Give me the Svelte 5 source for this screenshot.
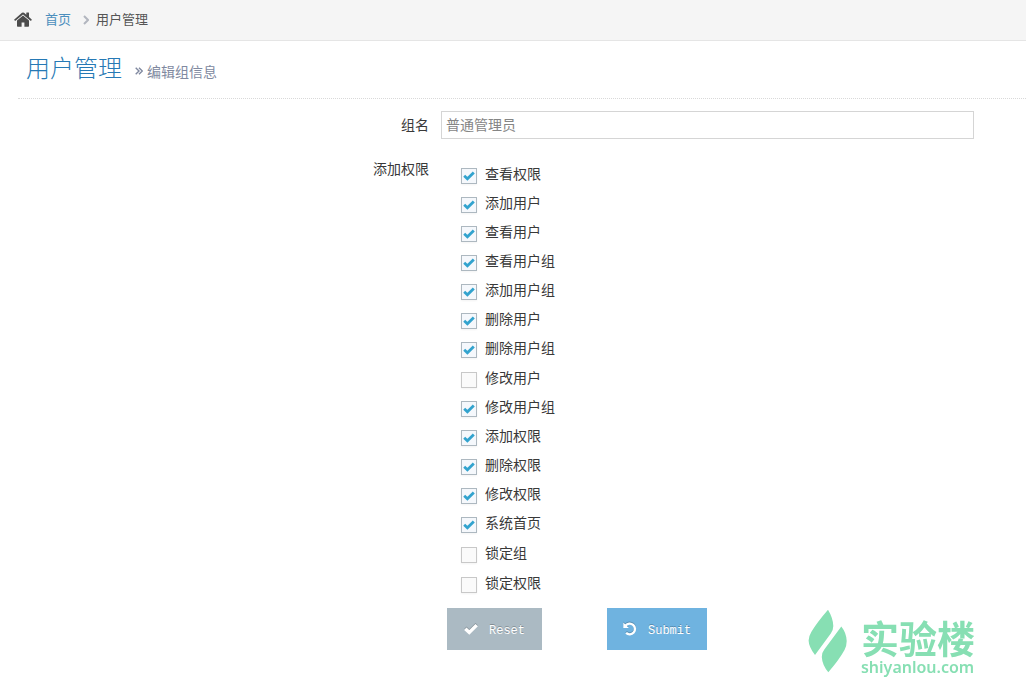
<script>
    let groupName = $state('普通管理员');

    const defaults = [
        { name: '查看权限', checked: true },
        { name: '添加用户', checked: true },
        { name: '查看用户', checked: true },
        { name: '查看用户组', checked: true },
        { name: '添加用户组', checked: true },
        { name: '删除用户', checked: true },
        { name: '删除用户组', checked: true },
        { name: '修改用户', checked: false },
        { name: '修改用户组', checked: true },
        { name: '添加权限', checked: true },
        { name: '删除权限', checked: true },
        { name: '修改权限', checked: true },
        { name: '系统首页', checked: true },
        { name: '锁定组', checked: false },
        { name: '锁定权限', checked: false }
    ];

    let permissions = $state(defaults.map(p => ({ ...p })));

    function handleReset(e) {
        e.preventDefault();
        groupName = '普通管理员';
        permissions = defaults.map(p => ({ ...p }));
    }

    function handleSubmit(e) {
        e.preventDefault();
    }
</script>

<nav class="breadcrumbs">
    <svg class="home" viewBox="0 0 18 15" aria-hidden="true">
        <path d="M9 3.6 3 8.6V14q0 .7.7.7h3.9v-4.2h2.8v4.2h3.9q.7 0 .7-.7V8.6z" />
        <path d="M17.7 7.4 15 5.1V.8q0-.4-.4-.4h-1.9q-.4 0-.4.4v2L10 .8Q9 0 8 .8L.3 7.4q-.3.3 0 .6l.6.7q.2.3.6 0L9 2.5l7.5 6.2q.4.3.6 0l.6-.7q.3-.3 0-.6z" />
    </svg>
    <a href="#home">首页</a>
    <svg class="separator" viewBox="0 0 6 10" aria-hidden="true">
        <path d="M1 1l4 4-4 4" />
    </svg>
    <span class="current">用户管理</span>
</nav>

<main class="page-content">
    <header class="page-header">
        <h1>用户管理</h1>
        <small>
            <svg class="angles" viewBox="0 0 8 8" aria-hidden="true">
                <path d="M.7.7 4 4 .7 7.3M4 .7 7.3 4 4 7.3" />
            </svg>
            编辑组信息
        </small>
    </header>

    <form onsubmit={handleSubmit} onreset={handleReset}>
        <label class="form-label" for="group-name">组名</label>
        <input id="group-name" class="text-input" type="text" bind:value={groupName} />

        <span class="form-label list-label" id="permissions-label">添加权限</span>
        <div class="permissions" role="group" aria-labelledby="permissions-label">
            {#each permissions as permission}
                <label class="permission" class:off={!permission.checked}>
                    <input type="checkbox" bind:checked={permission.checked} />
                    <span class="box">
                        {#if permission.checked}
                            <svg viewBox="0 0 12 10" aria-hidden="true">
                                <path d="M1.2 4.8 4.4 7.8 10.8 1.6" />
                            </svg>
                        {/if}
                    </span>
                    <span class="name">{permission.name}</span>
                </label>
            {/each}
        </div>

        <div class="actions">
            <button class="btn btn-reset" type="reset">
                <svg viewBox="0 0 14 14" aria-hidden="true">
                    <path class="stroke" d="M1.3 6.7 5.3 10.5 12.7 3.1" />
                </svg>
                <span>Reset</span>
            </button>
            <button class="btn btn-submit" type="submit">
                <svg viewBox="0 0 14 14" aria-hidden="true">
                    <path class="stroke thin" d="M2.6 3.6A5.3 5.3 0 1 1 3.1 10.9" />
                    <path class="fill" d="M.3.6v5q0 .5.5.5h5z" />
                </svg>
                <span>Submit</span>
            </button>
        </div>
    </form>
</main>

<div class="watermark">
    <svg class="leaf" viewBox="0 0 40 64" aria-hidden="true">
        <path d="M20 .8Q25 9 25.3 17q0 4-2.5 7.500L7 46Q.8 38 .6 31.500q0-4 2.700-8.500Q9 13.500 20 .8z" />
        <path d="M33.300 17.500Q38.500 24 38.700 32q0 5-2.200 9Q31 51 20.300 63.200 14.200 56 13.800 48q-.3-4 2.500-7.500z" />
    </svg>
    <div class="brand">
        <span class="brand-name">实验楼</span>
        <span class="brand-url">shiyanlou.com</span>
    </div>
</div>

<style>
    :global(body) {
        background: #fff;
        color: #393939;
        font-family: "Noto Sans CJK SC", "Liberation Sans", sans-serif;
        font-size: 14px;
        line-height: 20px;
    }

    .breadcrumbs {
        display: flex;
        align-items: center;
        height: 38px;
        padding: 0 14px 2px;
        border-bottom: 1px solid #e5e5e5;
        background: #f5f5f5;
        font-size: 13px;
    }
    .home {
        width: 18px;
        height: 15px;
        margin-right: 13px;
        fill: #4c4c4c;
    }
    .breadcrumbs a {
        color: #4c8fbd;
        text-decoration: none;
    }
    .separator {
        width: 6px;
        height: 10px;
        margin: 2px 7px 0 12px;
        fill: none;
        stroke: #b2b6bf;
        stroke-width: 2;
    }
    .current {
        color: #555;
    }

    .page-content {
        padding-left: 18px;
    }
    .page-header {
        display: flex;
        align-items: center;
        height: 51px;
        padding: 0 0 6px 8px;
        border-bottom: 1px dotted #d9d9d9;
    }
    h1 {
        margin: 0 13px 0 0;
        color: #2679b5;
        font-size: 24px;
        font-weight: 300;
        line-height: 32px;
    }
    small {
        display: flex;
        align-items: center;
        gap: 4px;
        padding-top: 8px;
        color: #8089a0;
        font-size: 14px;
    }
    .angles {
        width: 8px;
        height: 8px;
        fill: none;
        stroke: #8089a0;
        stroke-width: 1.4;
    }

    form {
        display: grid;
        grid-template-columns: minmax(0, 411fr) minmax(0, 533fr);
        column-gap: 12px;
        padding: 12px 52px 0 0;
    }
    .form-label {
        padding-top: 3px;
        text-align: right;
    }
    .list-label {
        padding-top: 19px;
    }
    .text-input {
        box-sizing: border-box;
        width: 100%;
        height: 28px;
        padding: 0 4px 2px;
        border: 1px solid #d5d5d5;
        border-radius: 0;
        background: #fff;
        color: #858585;
        font: inherit;
    }
    .permissions {
        display: flex;
        flex-direction: column;
        align-items: flex-start;
        padding: 21px 0 0 20px;
    }
    .permission {
        display: flex;
        align-items: center;
        gap: 8px;
        height: 29px;
    }
    .permission.off {
        padding-top: 1px;
    }
    .permission input {
        position: absolute;
        opacity: 0;
        margin: 0;
    }
    .name {
        padding-bottom: 3px;
    }
    .box {
        display: flex;
        align-items: center;
        justify-content: center;
        box-sizing: border-box;
        width: 16px;
        height: 16px;
        margin-top: 2px;
        border: 1px solid #adb8c0;
        background: #f5f8fc;
        box-shadow: 0 1px 2px rgba(0, 0, 0, 0.05);
    }
    .off .box {
        border-color: #c8c8c8;
        background: #fafafa;
    }
    .box svg {
        width: 12px;
        height: 10px;
        fill: none;
        stroke: #32a3ce;
        stroke-width: 2.8;
    }
    .permission input:focus-visible + .box {
        border-color: #6fb3e0;
    }

    .actions {
        grid-column: 2;
        display: flex;
        gap: 65px;
        padding: 10px 0 0 6px;
    }
    .btn {
        display: flex;
        align-items: center;
        justify-content: center;
        gap: 11px;
        min-width: 95px;
        height: 42px;
        padding: 0 16px;
        border: 0;
        color: #fff;
        font-family: "Liberation Mono", monospace;
        font-size: 12px;
        text-shadow: 0 -1px 0 rgba(0, 0, 0, 0.25);
        cursor: pointer;
    }
    .btn span {
        padding-top: 3px;
    }
    .btn-reset {
        background: #abbac3;
    }
    .btn-submit {
        background: #6fb3e0;
    }
    .btn svg {
        width: 14px;
        height: 14px;
        filter: drop-shadow(0 -1px 0 rgba(0, 0, 0, 0.2));
    }
    .stroke {
        fill: none;
        stroke: #fff;
        stroke-width: 3.4;
    }
    .stroke.thin {
        stroke-width: 2.3;
    }
    .fill {
        fill: #fff;
    }

    /* site mark floating over the bottom right corner */
    .watermark {
        position: fixed;
        right: 51px;
        bottom: 17px;
        display: flex;
        align-items: flex-start;
        gap: 13px;
        color: #87dfb3;
        pointer-events: none;
    }
    .leaf {
        width: 40px;
        height: 64px;
        fill: #87dfb3;
    }
    .brand {
        display: flex;
        flex-direction: column;
        padding-top: 9px;
    }
    .brand-name {
        font-size: 38px;
        font-weight: 700;
        line-height: 38px;
    }
    .brand-url {
        font-family: "Noto Sans", sans-serif;
        font-size: 16px;
        font-weight: 600;
        line-height: 22px;
    }
</style>
